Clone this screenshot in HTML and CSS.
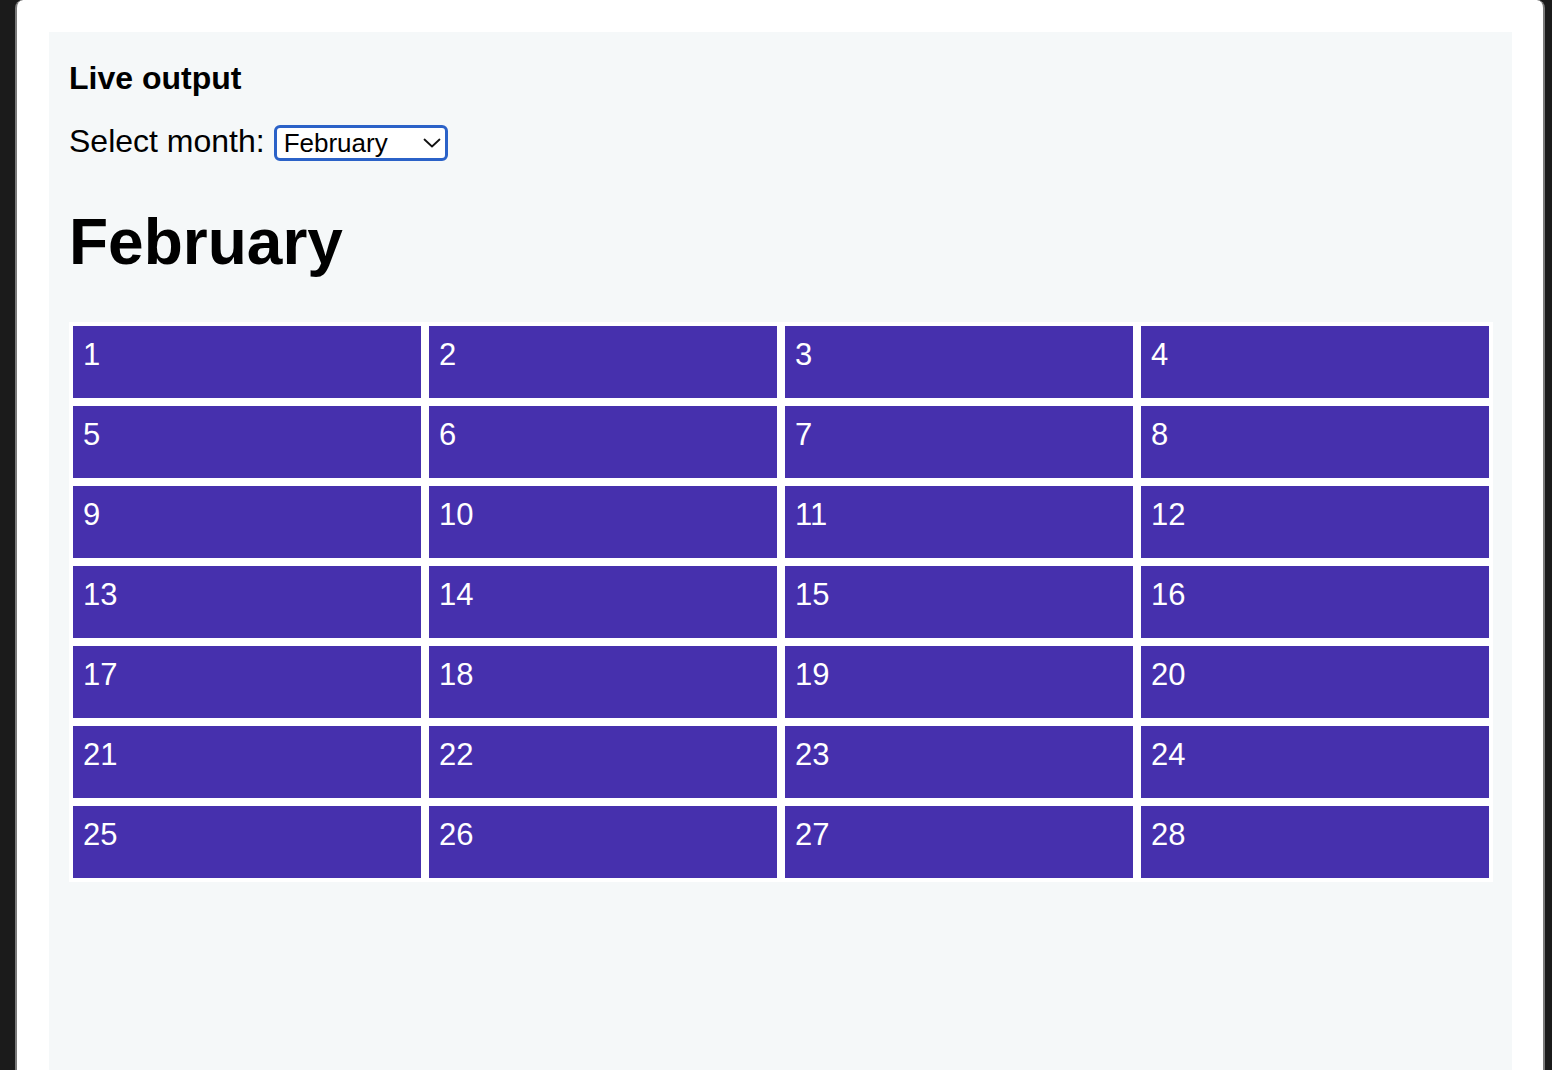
FILE: index.html
```html
<!DOCTYPE html>
<html lang="en">
<head>
  <meta charset="UTF-8">
  <meta name="viewport" content="width=device-width, initial-scale=1.0">
  <title>Live output</title>
  <link rel="stylesheet" href="styles.css">
</head>
<body>
  <div class="frame">
    <div class="output">
      <h4>Live output</h4>
      <div class="month-row">
        <label for="month">Select month:</label>
        <div class="select-wrap">
          <select id="month">
            <option>January</option>
            <option selected>February</option>
            <option>March</option>
            <option>April</option>
            <option>May</option>
            <option>June</option>
            <option>July</option>
            <option>August</option>
            <option>September</option>
            <option>October</option>
            <option>November</option>
            <option>December</option>
          </select>
          <svg class="chevron" width="18" height="10" viewBox="0 0 18 10">
            <path d="M1.5 1.5 L9 8.5 L16.5 1.5" fill="none" stroke="#111" stroke-width="1.8" stroke-linecap="round" stroke-linejoin="round"/>
          </svg>
        </div>
      </div>
      <h1 class="month-title">February</h1>
      <div class="calendar" id="calendar"></div>
    </div>
  </div>

  <script>
    document.addEventListener("DOMContentLoaded", function () {
      const select = document.getElementById("month");
      const title = document.querySelector(".month-title");
      const calendar = document.getElementById("calendar");

      // Build the day boxes for the chosen month
      function createCalendar(days, name) {
        calendar.innerHTML = "";
        title.textContent = name;
        for (let i = 1; i <= days; i++) {
          const day = document.createElement("div");
          day.className = "day";
          day.textContent = i;
          calendar.appendChild(day);
        }
      }

      select.addEventListener("change", function () {
        const choice = select.value;
        let days = 31;
        if (choice === "February") {
          days = 28;
        } else if (["April", "June", "September", "November"].includes(choice)) {
          days = 30;
        }
        createCalendar(days, choice);
      });

      createCalendar(28, "February");
    });
  </script>
</body>
</html>
```

FILE: styles.css
```css
body {
  margin: 0;
  padding: 0;
  background-color: #1b1b1b;
  font-family: "Liberation Sans", Arial, sans-serif;
  overflow: hidden;
}

.frame {
  margin-left: 15px;
  width: 1530px;
  min-height: 1070px;
  background-color: #fff;
  border-left: 2px solid #7a7a7a;
  border-right: 2px solid #7a7a7a;
  border-radius: 8px 8px 0 0;
  padding: 32px 31px 0 32px;
  box-sizing: border-box;
}

.output {
  background-color: #f5f8f9;
  min-height: 1040px;
  padding: 28px 20px 20px 20px;
  box-sizing: border-box;
}

h4 {
  margin: 0;
  font-size: 32px;
  font-weight: bold;
  color: #000;
}

.month-row {
  display: flex;
  align-items: flex-start;
  margin-top: 26px;
  font-size: 32px;
  color: #000;
}

.month-row label {
  margin-right: 9px;
}

.select-wrap {
  position: relative;
}

.select-wrap select {
  appearance: none;
  -webkit-appearance: none;
  width: 174px;
  height: 36px;
  padding: 0 0 0 7px;
  border: 3px solid #2b62c8;
  border-radius: 6px;
  background-color: #fff;
  font-family: "Liberation Sans", Arial, sans-serif;
  font-size: 26px;
  color: #000;
  outline: none;
}

.chevron {
  position: absolute;
  right: 7px;
  top: 15px;
  pointer-events: none;
}

.month-title {
  margin: 44px 0 0 0;
  font-size: 64px;
  font-weight: bold;
  color: #000;
}

.calendar {
  display: grid;
  grid-template-columns: repeat(4, 1fr);
  gap: 8px;
  padding: 4px;
  margin-top: 43px;
  width: 1424px;
  box-sizing: border-box;
  background-color: #fff;
}

.day {
  height: 72px;
  padding: 11px 10px;
  box-sizing: border-box;
  background-color: #4630ad;
  color: #fff;
  font-size: 31px;
}
```
